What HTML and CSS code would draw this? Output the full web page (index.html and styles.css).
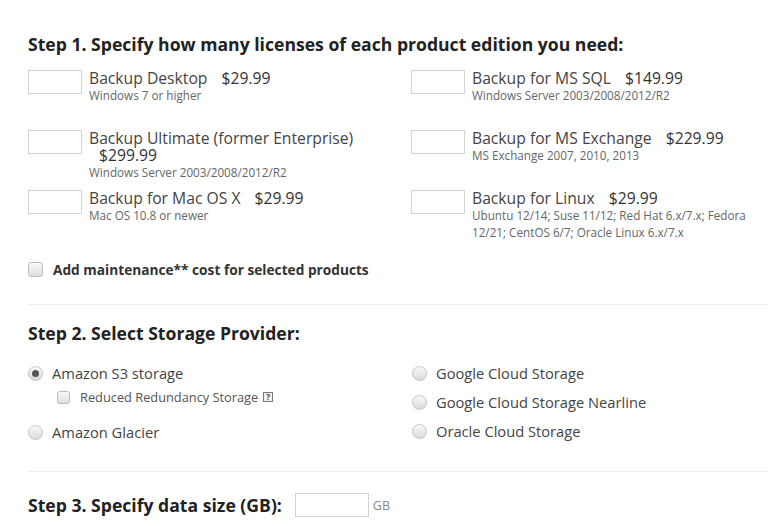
FILE: index.html
```html
<!DOCTYPE html>
<html lang="en">
<head>
    <meta charset="UTF-8">
    <meta name="viewport" content="width=device-width, initial-scale=1.0">
    <title>Price Calculator</title>
    <link rel="stylesheet" href="styles.css">
</head>
<body>
    <div class="step step-licenses">
        <h2>Step 1. Specify how many licenses of each product edition you need:</h2>
        <div class="products">
            <div class="product">
                <input type="text" class="qty">
                <div class="product-info">
                    <div class="product-name">Backup Desktop <span class="price">$29.99</span></div>
                    <div class="product-note">Windows 7 or higher</div>
                </div>
            </div>
            <div class="product">
                <input type="text" class="qty">
                <div class="product-info">
                    <div class="product-name">Backup for MS SQL <span class="price">$149.99</span></div>
                    <div class="product-note">Windows Server 2003/2008/2012/R2</div>
                </div>
            </div>
            <div class="product">
                <input type="text" class="qty">
                <div class="product-info">
                    <div class="product-name">Backup Ultimate (former Enterprise) <span class="price">$299.99</span></div>
                    <div class="product-note">Windows Server 2003/2008/2012/R2</div>
                </div>
            </div>
            <div class="product">
                <input type="text" class="qty">
                <div class="product-info">
                    <div class="product-name">Backup for MS Exchange <span class="price">$229.99</span></div>
                    <div class="product-note">MS Exchange 2007, 2010, 2013</div>
                </div>
            </div>
            <div class="product">
                <input type="text" class="qty">
                <div class="product-info">
                    <div class="product-name">Backup for Mac OS X <span class="price">$29.99</span></div>
                    <div class="product-note">Mac OS 10.8 or newer</div>
                </div>
            </div>
            <div class="product">
                <input type="text" class="qty">
                <div class="product-info">
                    <div class="product-name">Backup for Linux <span class="price">$29.99</span></div>
                    <div class="product-note">Ubuntu 12/14; Suse 11/12; Red Hat 6.x/7.x; Fedora 12/21; CentOS 6/7; Oracle Linux 6.x/7.x</div>
                </div>
            </div>
        </div>
        <label class="maintenance">
            <span class="checkbox"></span>
            Add maintenance** cost for selected products
        </label>
    </div>

    <div class="step step-storage">
        <h2>Step 2. Select Storage Provider:</h2>
        <div class="providers">
            <div class="provider-col">
                <label class="option"><span class="radio checked"></span>Amazon S3 storage</label>
                <label class="sub-option"><span class="checkbox small"></span>Reduced Redundancy Storage <span class="help">?</span></label>
                <label class="option"><span class="radio"></span>Amazon Glacier</label>
            </div>
            <div class="provider-col">
                <label class="option"><span class="radio"></span>Google Cloud Storage</label>
                <label class="option"><span class="radio"></span>Google Cloud Storage Nearline</label>
                <label class="option"><span class="radio"></span>Oracle Cloud Storage</label>
            </div>
        </div>
    </div>

    <div class="step step-size">
        <h2>Step 3. Specify data size (GB):</h2>
        <input type="text" class="size-input">
        <span class="unit">GB</span>
    </div>
</body>
</html>
```

FILE: styles.css
```css
body {
    margin: 0;
    font-family: "Open Sans", Arial, sans-serif;
    color: #444;
    background: #fff;
}
h2 {
    margin: 0;
    font-size: 17.6px;
    line-height: 24px;
    font-weight: 700;
    color: #222;
}
.step {
    margin-left: 28px;
    border-bottom: 1px solid #ececec;
}
.step-licenses {
    padding: 32px 0 24px;
}
.products {
    display: grid;
    grid-template-columns: 383px 1fr;
    grid-auto-rows: 60px;
    margin-top: 14px;
    padding-right: 8px;
}
.product {
    display: flex;
    align-items: flex-start;
    padding-right: 10px;
}
.qty {
    flex: none;
    width: 54px;
    height: 24px;
    box-sizing: border-box;
    margin: 0 7px 0 0;
    border: 1px solid #d3d3d3;
    outline: none;
}
.product-name {
    font-size: 15.7px;
    line-height: 17px;
    color: #444;
}
.price {
    margin-left: 10px;
    color: #333;
}
.product-note {
    font-size: 11.7px;
    line-height: 17px;
    color: #666;
}
.maintenance {
    display: flex;
    align-items: center;
    margin: 9px 0 1px;
    height: 20px;
    font-size: 13.7px;
    font-weight: 700;
    color: #333;
}
.checkbox {
    display: inline-block;
    flex: none;
    width: 15px;
    height: 15px;
    box-sizing: border-box;
    border: 1px solid #bdbdbd;
    border-radius: 3px;
    background: linear-gradient(#fafafa, #dedede);
    margin-right: 10px;
}
.checkbox.small {
    width: 13px;
    height: 13px;
    margin-right: 10px;
}
.step-storage {
    padding: 16px 0 26px;
}
.providers {
    display: grid;
    grid-template-columns: 384px 1fr;
    margin: 16px 0 1px;
}
.provider-col {
    display: flex;
    flex-direction: column;
    gap: 5px;
}
.option {
    display: flex;
    align-items: center;
    height: 24px;
    font-size: 14.7px;
    color: #444;
}
.radio {
    position: relative;
    flex: none;
    width: 15px;
    height: 15px;
    box-sizing: border-box;
    border: 1px solid #c4c4c4;
    border-radius: 50%;
    background: linear-gradient(#fafafa, #d9d9d9);
    margin-right: 9px;
}
.radio.checked::after {
    content: "";
    position: absolute;
    left: 3px;
    top: 3px;
    width: 7px;
    height: 7px;
    border-radius: 50%;
    background: #555;
}
.sub-option {
    display: flex;
    align-items: center;
    height: 16px;
    margin: -1px 0 10px 29px;
    font-size: 12.8px;
    color: #555;
}
.help {
    display: inline-block;
    width: 10px;
    height: 10px;
    box-sizing: border-box;
    margin-left: 5px;
    border: 1px solid #777;
    background: #eee;
    font-size: 8px;
    line-height: 8px;
    font-weight: 700;
    text-align: center;
    color: #444;
}
.step-size {
    display: flex;
    align-items: center;
    padding-top: 21px;
    border-bottom: none;
}
.size-input {
    width: 74px;
    height: 24px;
    box-sizing: border-box;
    margin: 0 4px 0 13px;
    border: 1px solid #d3d3d3;
    outline: none;
}
.unit {
    font-size: 12.5px;
    color: #888;
}
```
